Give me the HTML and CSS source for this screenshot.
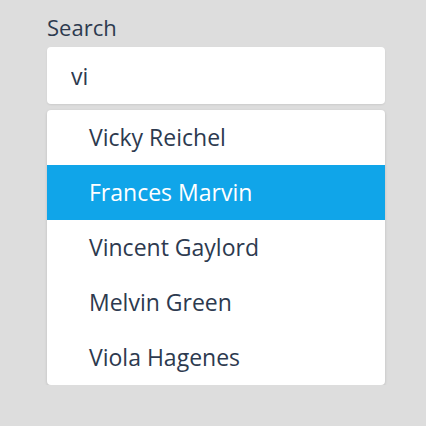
FILE: index.html
```html
<!DOCTYPE html>
<html>
<head>
<meta charset="utf-8">
<link rel="stylesheet" href="styles.css">
</head>
<body>
<div class="field">
  <label class="label" for="q">Search</label>
  <input id="q" class="input" type="text" value="vi">
  <ul class="menu">
    <li class="item">Vicky Reichel</li>
    <li class="item active">Frances Marvin</li>
    <li class="item">Vincent Gaylord</li>
    <li class="item">Melvin Green</li>
    <li class="item">Viola Hagenes</li>
  </ul>
</div>
</body>
</html>
```

FILE: styles.css
```css
html, body {
  margin: 0;
  padding: 0;
  background: #dddddd;
  font-family: "Open Sans", "Noto Sans", sans-serif;
  color: #2d3a4f;
}
.field {
  width: 338px;
  padding: 12px 0 0 47px;
  display: flex;
  flex-direction: column;
}
.label {
  font-size: 22px;
  line-height: 30px;
  height: 35px;
  color: #2d3a4f;
}
.input {
  box-sizing: border-box;
  height: 57px;
  width: 338px;
  border: none;
  border-radius: 4px;
  background: #fff;
  padding: 0 24px;
  font-family: inherit;
  font-size: 23px;
  color: #2d3a4f;
  outline: none;
  box-shadow: 0 1px 2px rgba(0,0,0,0.08);
}
.menu {
  list-style: none;
  margin: 6px 0 0 0;
  padding: 0;
  background: #fff;
  border-radius: 4px;
  box-shadow: 0 1px 3px rgba(0,0,0,0.15);
  overflow: hidden;
}
.item {
  height: 55px;
  line-height: 55px;
  padding-left: 42px;
  font-size: 23px;
  color: #2d3a4f;
}
.item.active {
  background: #10a5e9;
  color: #fff;
}
```
